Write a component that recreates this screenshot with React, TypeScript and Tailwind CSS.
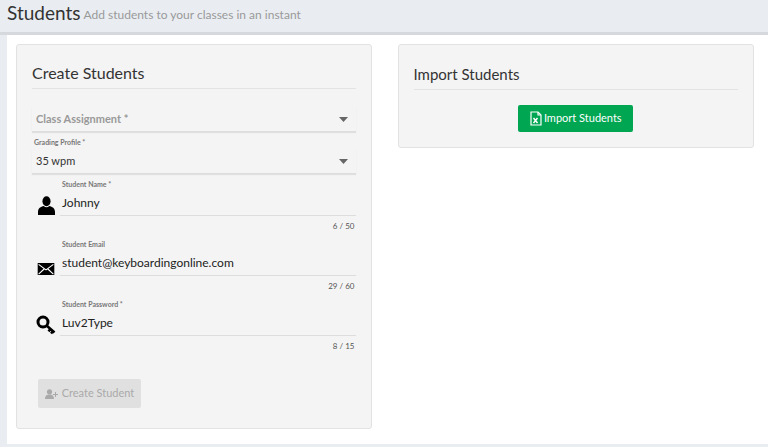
import React from "react";

const Caret = () => (
  <svg width="9" height="5" viewBox="0 0 9 5" className="fill-[#666]">
    <path d="M0 0h9L4.5 5z" />
  </svg>
);

const UserIcon = () => (
  <svg width="17" height="19" viewBox="0 0 18 20" className="fill-black">
    <ellipse cx="9" cy="5.5" rx="4.3" ry="5.2" />
    <path d="M6 10.5c-3 .8-6 2.2-6 6.5v3h18v-3c0-4.3-3-5.7-6-6.5-1 1-2 1.4-3 1.4s-2-.4-3-1.4z" />
  </svg>
);

const MailIcon = () => (
  <svg width="18" height="12" viewBox="0 0 18 13">
    <rect width="18" height="13" className="fill-black" />
    <path d="M1 1.5l8 6 8-6M1 12l6-5.5M17 12l-6-5.5" stroke="#fff" strokeWidth="1.2" fill="none" />
  </svg>
);

const KeyIcon = () => (
  <svg width="21" height="20" viewBox="0 0 21 20" fill="none" stroke="black">
    <circle cx="7" cy="7" r="5" strokeWidth="3" />
    <path d="M10.5 10.5l8 7M14.5 14l-2 2.3M17 16.2l-2 2.3" strokeWidth="2.6" />
  </svg>
);

const Field = ({
  label,
  value,
  count,
  icon,
}: {
  label: string;
  value: string;
  count: string;
  icon: React.ReactNode;
}) => (
  <div className="flex flex-col">
    <div className="pl-[30px] text-[7px] font-bold text-[#777] leading-[10px] h-[10px]">{label}</div>
    <div className="flex items-end mt-[6px]">
      <div className="w-[28px] flex justify-center pb-[1px]">{icon}</div>
      <div className="flex-1 border-b border-[#ddd] pl-[2px] pb-[4px] text-[12px] leading-[16px] text-[#222] font-[family-name:'Liberation_Sans',Arial,sans-serif]">
        {value}
      </div>
    </div>
    <div className="text-right text-[8px] text-[#555] mt-[5px] pr-[1px] leading-[10px]">{count}</div>
  </div>
);

export default function App() {
  return (
    <div className="min-h-[447px] bg-[#e9edf2] font-[family-name:Lato,sans-serif]">
      <div className="h-[35px] flex items-end px-[7px] pb-[9px] border-b-[3px] border-[#d5d9de]">
        <span className="text-[19px] leading-[20px] text-[#333]">Students</span>
        <span className="text-[12px] text-[#999] ml-[3px] leading-[16px]">Add students to your classes in an instant</span>
      </div>
      <div className="ml-[7px] bg-white min-h-[409px] pt-[9px] pl-[9px] pr-[14px] flex gap-[26px] items-start">
        <div className="w-[356px] bg-[#f4f4f4] border border-[#e2e2e2] rounded-[3px] px-[15px] pt-[18px] pb-[20px]">
          <div className="text-[16px] text-[#333] pb-[5px] border-b border-[#e3e3e3] leading-[20px]">Create Students</div>
          <div className="mt-[18px] h-[25px] flex items-center justify-between px-[4px] pr-[8px] border-b border-[#ddd] shadow-[0_1px_1px_rgba(0,0,0,0.08)] text-[11px] font-bold text-[#999]">
            Class Assignment *<Caret />
          </div>
          <div className="mt-[5px] text-[7px] font-bold text-[#777] pl-[2px] leading-[10px]">Grading Profile *</div>
          <div className="mt-[2px] h-[25px] flex items-center justify-between px-[4px] pr-[8px] border-b border-[#ddd] shadow-[0_1px_1px_rgba(0,0,0,0.08)] text-[11px] text-[#333] font-[family-name:'Liberation_Sans',Arial,sans-serif]">
            35 wpm<Caret />
          </div>
          <div className="mt-[5px] flex flex-col gap-[8px]">
            <Field label="Student Name *" value="Johnny" count="6 / 50" icon={<UserIcon />} />
            <Field label="Student Email" value="student@keyboardingonline.com" count="29 / 60" icon={<MailIcon />} />
            <Field label="Student Password *" value="Luv2Type" count="8 / 15" icon={<KeyIcon />} />
          </div>
          <button className="mt-[28px] ml-[6px] w-[103px] h-[29px] bg-[#e0e0e0] rounded-[2px] flex items-center justify-center gap-[4px] text-[11px] text-[#aaa]">
            <svg width="13" height="10" viewBox="0 0 13 10" className="fill-[#aaa]">
              <circle cx="4.5" cy="2.8" r="2.6" />
              <path d="M0 10c0-3.5 2-4.6 4.5-4.6S9 6.5 9 10zM10 3h1v2h2v1h-2v2h-1V6H8V5h2z" />
            </svg>
            Create Student
          </button>
        </div>
        <div className="w-[357px] bg-[#f4f4f4] border border-[#e2e2e2] rounded-[3px] px-[15px] pt-[19px] pb-[15px]">
          <div className="text-[15px] text-[#333] pb-[5px] border-b border-[#e3e3e3] leading-[20px]">Import Students</div>
          <div className="flex justify-center mt-[15px]">
            <button className="w-[115px] h-[27px] bg-[#00a651] rounded-[2px] flex items-center justify-center gap-[2px] text-[11px] text-white">
              <svg width="12" height="15" viewBox="0 0 12 15" fill="none" stroke="white" strokeWidth="1.2">
                <path d="M1 1h7l3 3v10H1z" />
                <path d="M8 1v3h3" />
                <path d="M3.5 7l4 5M7.5 7l-4 5" strokeWidth="1.5" />
              </svg>
              Import Students
            </button>
          </div>
        </div>
      </div>
    </div>
  );
}
